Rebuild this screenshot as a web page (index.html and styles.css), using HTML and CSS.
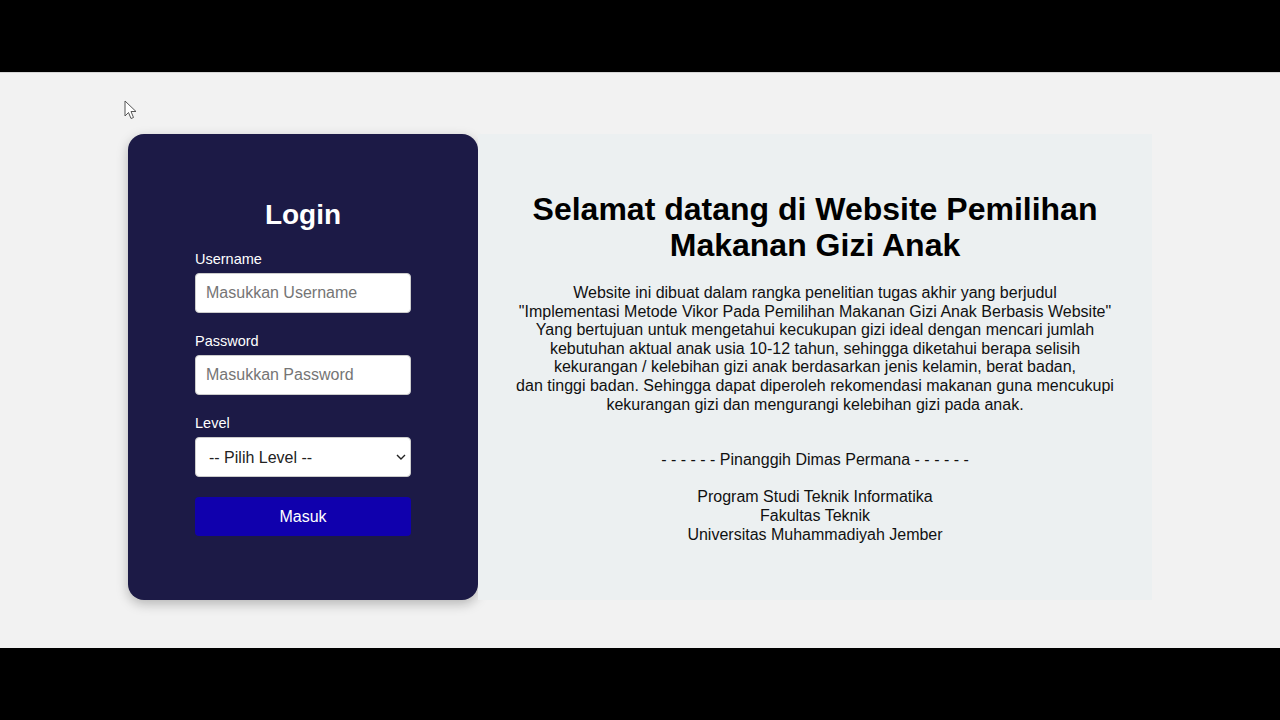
FILE: index.html
```html
<!DOCTYPE html>
<html lang="en">
<head>
  <meta charset="UTF-8" />
  <meta name="viewport" content="width=device-width, initial-scale=1" />
  <title>Login - Pemilihan Makanan Gizi Anak</title>
  <link rel="stylesheet" href="styles.css">
</head>
<body>

  <div class="bar"></div>

  <div class="screen">
    <svg class="cursor" width="14" height="20" viewBox="0 0 14 20">
      <path d="M1 1 L1 16 L4.5 12.5 L7 18.5 L9.5 17.5 L7 11.5 L12 11.5 Z" fill="#fff" stroke="#555" stroke-width="1"/>
    </svg>

    <div class="container">
      <div class="login-box">
        <h2>Login</h2>
        <form>
          <div class="form-group">
            <label for="username">Username</label>
            <input type="text" id="username" placeholder="Masukkan Username">
          </div>
          <div class="form-group">
            <label for="password">Password</label>
            <input type="password" id="password" placeholder="Masukkan Password">
          </div>
          <div class="form-group">
            <label for="level">Level</label>
            <div class="select-wrap">
              <select id="level">
                <option>-- Pilih Level --</option>
                <option>Admin</option>
                <option>User</option>
              </select>
              <svg class="chevron" width="10" height="6" viewBox="0 0 10 6">
                <path d="M1 1 L5 5 L9 1" fill="none" stroke="#222" stroke-width="1.4"/>
              </svg>
            </div>
          </div>
          <button type="button">Masuk</button>
        </form>
      </div>

      <div class="info-box">
        <h1>Selamat datang di Website Pemilihan<br>Makanan Gizi Anak</h1>
        <p>
          Website ini dibuat dalam rangka penelitian tugas akhir yang berjudul<br>
          "Implementasi Metode Vikor Pada Pemilihan Makanan Gizi Anak Berbasis Website"<br>
          Yang bertujuan untuk mengetahui kecukupan gizi ideal dengan mencari jumlah<br>
          kebutuhan aktual anak usia 10-12 tahun, sehingga diketahui berapa selisih<br>
          kekurangan / kelebihan gizi anak berdasarkan jenis kelamin, berat badan,<br>
          dan tinggi badan. Sehingga dapat diperoleh rekomendasi makanan guna mencukupi<br>
          kekurangan gizi dan mengurangi kelebihan gizi pada anak.
        </p>
        <p class="author">- - - - - - Pinanggih Dimas Permana - - - - - -</p>
        <p class="campus">
          Program Studi Teknik Informatika<br>
          Fakultas Teknik<br>
          Universitas Muhammadiyah Jember
        </p>
      </div>
    </div>
  </div>

  <div class="bar"></div>

</body>
</html>
```

FILE: styles.css
```css
body {
  margin: 0;
  background: #000;
  font-family: "Liberation Sans", Arial, sans-serif;
}
.bar {
  height: 72px;
  background: #000;
}
.screen {
  position: relative;
  height: 575px;
  background: #f2f2f2;
  border-top: 1px solid #d6d6d6;
  overflow: hidden;
}
.cursor {
  position: absolute;
  left: 124px;
  top: 27px;
}
.container {
  display: flex;
  width: 1024px;
  margin: 61px auto 0;
  height: 466px;
}
.login-box {
  width: 350px;
  box-sizing: border-box;
  background: #1c1a46;
  border-radius: 16px;
  box-shadow: 0 4px 12px rgba(0,0,0,0.25);
  padding: 65px 67px 0;
  color: #fff;
}
.login-box h2 {
  margin: 0 0 20px;
  text-align: center;
  font-size: 28px;
  line-height: 32px;
  font-weight: 700;
}
.form-group {
  margin-bottom: 20px;
}
.form-group label {
  display: block;
  font-size: 14.5px;
  line-height: 16px;
  margin-bottom: 6px;
}
.form-group input,
.form-group select {
  display: block;
  width: 100%;
  height: 40px;
  box-sizing: border-box;
  border: 1px solid #ccc;
  border-radius: 4px;
  padding: 0 10px;
  font-family: "Liberation Sans", Arial, sans-serif;
  font-size: 16px;
  background: #fff;
  color: #222;
}
.form-group input::placeholder {
  color: #757575;
}
.select-wrap {
  position: relative;
}
.form-group select {
  appearance: none;
  -webkit-appearance: none;
  padding-left: 13px;
}
.chevron {
  position: absolute;
  right: 5px;
  top: 17px;
}
button {
  display: block;
  width: 100%;
  height: 39px;
  border: none;
  border-radius: 4px;
  background: #1000ad;
  color: #fff;
  font-family: "Liberation Sans", Arial, sans-serif;
  font-size: 16px;
  cursor: pointer;
}
.info-box {
  flex: 1;
  background: #ecf0f1;
  padding-top: 57px;
  text-align: center;
  color: #111;
}
.info-box h1 {
  margin: 0 0 21px;
  font-size: 32px;
  line-height: 36px;
  font-weight: 700;
  color: #000;
}
.info-box p {
  margin: 0;
  font-size: 16px;
  line-height: 18.6px;
}
.info-box .author {
  margin-top: 37px;
}
.info-box .campus {
  margin-top: 18.6px;
}
```
